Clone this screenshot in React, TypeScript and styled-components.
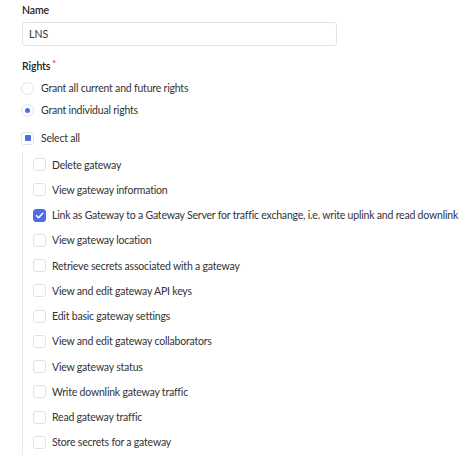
import styled, { createGlobalStyle } from 'styled-components';

const GlobalStyle = createGlobalStyle`
  html, body {
    margin: 0;
    padding: 0;
    background: #ffffff;
  }
  body {
    font-family: "Source Sans Pro", Lato, "Noto Sans", sans-serif;
    color: #222222;
  }
`;

const rights = [
  { label: 'Delete gateway', checked: false },
  { label: 'View gateway information', checked: false },
  {
    label:
      'Link as Gateway to a Gateway Server for traffic exchange, i.e. write uplink and read downlink',
    checked: true,
  },
  { label: 'View gateway location', checked: false },
  { label: 'Retrieve secrets associated with a gateway', checked: false },
  { label: 'View and edit gateway API keys', checked: false },
  { label: 'Edit basic gateway settings', checked: false },
  { label: 'View and edit gateway collaborators', checked: false },
  { label: 'View gateway status', checked: false },
  { label: 'Write downlink gateway traffic', checked: false },
  { label: 'Read gateway traffic', checked: false },
  { label: 'Store secrets for a gateway', checked: false },
];

export default function App() {
  return (
    <>
      <GlobalStyle />
      <Form>
        <Field>
          <Label>Name</Label>
          <Input defaultValue="LNS" />
        </Field>
        <Field $gap={4}>
          <Label>
            Rights<Required>*</Required>
          </Label>
          <Options>
            <OptionRow>
              <Radio />
              <span>Grant all current and future rights</span>
            </OptionRow>
            <OptionRow>
              <Radio $selected />
              <span>Grant individual rights</span>
            </OptionRow>
            <OptionRow $tall>
              <Box $indeterminate />
              <span>Select all</span>
            </OptionRow>
            <RightsList>
              {rights.map(right => (
                <RightRow key={right.label}>
                  <Box $checked={right.checked}>
                    {right.checked && (
                      <svg width="9" height="9" viewBox="0 0 10 10">
                        <path
                          d="M1.6 5.2 L4 7.5 L8.6 2.6"
                          fill="none"
                          stroke="#ffffff"
                          strokeWidth="1.7"
                          strokeLinecap="round"
                          strokeLinejoin="round"
                        />
                      </svg>
                    )}
                  </Box>
                  <span>{right.label}</span>
                </RightRow>
              ))}
            </RightsList>
          </Options>
        </Field>
      </Form>
    </>
  );
}

const Form = styled.div`
  padding: 3px 0 0 22px;
  display: flex;
  flex-direction: column;
  gap: 13px;
`;

const Field = styled.div<{ $gap?: number }>`
  display: flex;
  flex-direction: column;
  gap: ${p => p.$gap ?? 5}px;
`;

const Label = styled.div`
  font-size: 10.5px;
  font-weight: 600;
  line-height: 14px;
  letter-spacing: -0.1px;
  color: #222222;
`;

const Required = styled.span`
  color: #e04040;
  font-size: 9px;
  vertical-align: top;
  margin-left: 2px;
  position: relative;
  top: -2px;
`;

const Input = styled.input`
  box-sizing: border-box;
  width: 315px;
  height: 24px;
  border: 1px solid #e3e3e3;
  border-radius: 3px;
  padding: 0 6px;
  font-family: inherit;
  font-size: 10.5px;
  color: #333333;
  outline: none;
  background: #ffffff;
`;

const Options = styled.div`
  display: flex;
  flex-direction: column;
`;

const OptionRow = styled.label<{ $tall?: boolean }>`
  display: flex;
  align-items: center;
  gap: 7px;
  height: ${p => (p.$tall ? 28 : 22)}px;
  padding-top: ${p => (p.$tall ? 6 : 0)}px;
  box-sizing: border-box;
  font-size: 10.5px;
  letter-spacing: -0.2px;
  color: #333333;
`;

const Radio = styled.span<{ $selected?: boolean }>`
  box-sizing: border-box;
  width: 13px;
  height: 13px;
  border-radius: 50%;
  border: 1px solid #e2e2e2;
  background: #ffffff;
  display: flex;
  align-items: center;
  justify-content: center;
  flex-shrink: 0;
  margin-left: -1px;

  &::after {
    content: '';
    display: ${p => (p.$selected ? 'block' : 'none')};
    width: 5px;
    height: 5px;
    border-radius: 50%;
    background: #4c6ce8;
  }
`;

const Box = styled.span<{ $checked?: boolean; $indeterminate?: boolean }>`
  box-sizing: border-box;
  width: 13px;
  height: 13px;
  border-radius: 3px;
  border: 1px solid ${p => (p.$checked ? '#4c6ce8' : '#e2e2e2')};
  background: ${p => (p.$checked ? '#4c6ce8' : '#ffffff')};
  display: flex;
  align-items: center;
  justify-content: center;
  flex-shrink: 0;
  margin-left: ${p => (p.$indeterminate ? -1 : 0)}px;

  &::after {
    content: '';
    display: ${p => (p.$indeterminate ? 'block' : 'none')};
    width: 6px;
    height: 6px;
    border-radius: 1px;
    background: #4c6ce8;
  }
`;

const RightsList = styled.div`
  margin-top: 3px;
  border-left: 1px solid #ebebeb;
  padding: 0 0 0 10px;
  display: flex;
  flex-direction: column;
`;

const RightRow = styled.label`
  display: flex;
  align-items: center;
  gap: 6px;
  height: 25.25px;
  font-size: 10.5px;
  letter-spacing: -0.2px;
  color: #333333;
  white-space: nowrap;
`;
